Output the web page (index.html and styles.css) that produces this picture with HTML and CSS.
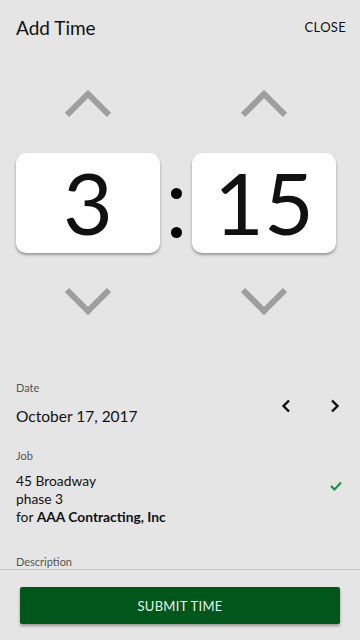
FILE: index.html
```html
<!DOCTYPE html>
<html lang="en">
<head>
    <meta charset="UTF-8">
    <meta name="viewport" content="width=device-width, initial-scale=1.0">
    <title>Add Time</title>
    <link rel="stylesheet" href="styles.css">
</head>
<body>

    <header class="top-bar">
        <h1>Add Time</h1>
        <a class="close" href="#">CLOSE</a>
    </header>

    <div class="picker">
        <div class="picker-col">
            <svg class="chevron" width="46" height="28" viewBox="0 0 46 28"><path d="M2 25 L23 4 L44 25" fill="none" stroke="#9e9e9e" stroke-width="6"/></svg>
            <div class="time-box">3</div>
            <svg class="chevron" width="46" height="28" viewBox="0 0 46 28"><path d="M2 3 L23 24 L44 3" fill="none" stroke="#9e9e9e" stroke-width="6"/></svg>
        </div>
        <div class="colon"><span></span><span></span></div>
        <div class="picker-col">
            <svg class="chevron" width="46" height="28" viewBox="0 0 46 28"><path d="M2 25 L23 4 L44 25" fill="none" stroke="#9e9e9e" stroke-width="6"/></svg>
            <div class="time-box">15</div>
            <svg class="chevron" width="46" height="28" viewBox="0 0 46 28"><path d="M2 3 L23 24 L44 3" fill="none" stroke="#9e9e9e" stroke-width="6"/></svg>
        </div>
    </div>

    <div class="fields">
        <div class="field">
            <div class="field-label">Date</div>
            <div class="date-row">
                <div class="date-value">October 17, 2017</div>
                <div class="date-nav">
                    <svg width="10" height="14" viewBox="0 0 10 14"><path d="M8 1.5 L2.5 7 L8 12.5" fill="none" stroke="#111" stroke-width="2.4"/></svg>
                    <svg width="10" height="14" viewBox="0 0 10 14"><path d="M2 1.5 L7.5 7 L2 12.5" fill="none" stroke="#111" stroke-width="2.4"/></svg>
                </div>
            </div>
        </div>

        <div class="field">
            <div class="field-label">Job</div>
            <div class="job-row">
                <div class="job-text">
                    45 Broadway<br>
                    phase 3<br>
                    for <b>AAA Contracting, Inc</b>
                </div>
                <svg class="check" width="12" height="10" viewBox="0 0 12 10"><path d="M1 5 L4.5 8.5 L11 1.5" fill="none" stroke="#1a8c3c" stroke-width="2"/></svg>
            </div>
        </div>

        <div class="field-label desc">Description</div>
    </div>

    <footer class="bottom">
        <button class="submit">SUBMIT TIME</button>
    </footer>

</body>
</html>
```

FILE: styles.css
```css
body {
    font-family: Lato, "Open Sans", sans-serif;
    background-color: #e5e5e5;
    margin: 0;
    width: 360px;
    height: 640px;
    overflow: hidden;
    color: #111;
}

.top-bar {
    display: flex;
    justify-content: space-between;
    align-items: center;
    padding: 15px 14px 0 16px;
    height: 24px;
}

h1 {
    margin: 0;
    font-size: 19px;
    font-weight: 400;
}

.close {
    color: #111;
    text-decoration: none;
    font-size: 13px;
    letter-spacing: 0.3px;
}

.picker {
    display: flex;
    align-items: center;
    padding-left: 16px;
    margin-top: 51px;
}

.picker-col {
    display: flex;
    flex-direction: column;
    align-items: center;
}

.chevron {
    display: block;
}

.time-box {
    width: 144px;
    height: 100px;
    margin: 35px 0 34px;
    background-color: #fff;
    border-radius: 10px;
    box-shadow: 0 2px 3px rgba(0, 0, 0, 0.35);
    display: flex;
    justify-content: center;
    align-items: center;
    font-size: 86px;
    font-weight: 400;
    line-height: 1;
    padding-bottom: 2px;
    box-sizing: border-box;
}

.colon {
    width: 32px;
    display: flex;
    flex-direction: column;
    align-items: center;
    gap: 28px;
    padding-top: 20px;
}

.colon span {
    width: 11px;
    height: 11px;
    border-radius: 50%;
    background-color: #000;
}

.fields {
    padding: 0 16px;
    margin-top: 66px;
}

.field-label {
    font-size: 11px;
    line-height: 13px;
    color: #555;
}

.date-row {
    display: flex;
    justify-content: space-between;
    align-items: flex-start;
}

.date-value {
    font-size: 15.5px;
    line-height: 19px;
    margin-top: 13px;
}

.date-nav {
    display: flex;
    gap: 39px;
    margin-right: 4px;
    margin-top: 5px;
}

.date-nav svg {
    display: block;
}

.field + .field {
    margin-top: 23px;
}

.job-row {
    display: flex;
    justify-content: space-between;
    align-items: flex-start;
    margin-top: 10px;
}

.job-text {
    font-size: 13.8px;
    line-height: 18px;
}

.check {
    margin-top: 9px;
    margin-right: 2px;
}

.desc {
    margin-top: 29px;
}

.bottom {
    position: absolute;
    left: 0;
    right: 0;
    top: 569px;
    bottom: 0;
    border-top: 1px solid #c4c4c4;
    background-color: #e5e5e5;
    padding: 17px 20px 0;
}

.submit {
    width: 100%;
    height: 37px;
    background-color: #00561b;
    color: #e8f2ea;
    border: none;
    border-radius: 2px;
    box-shadow: 0 2px 3px rgba(0, 0, 0, 0.35);
    font-family: Lato, "Open Sans", sans-serif;
    font-size: 13px;
    letter-spacing: 0.3px;
}
```
